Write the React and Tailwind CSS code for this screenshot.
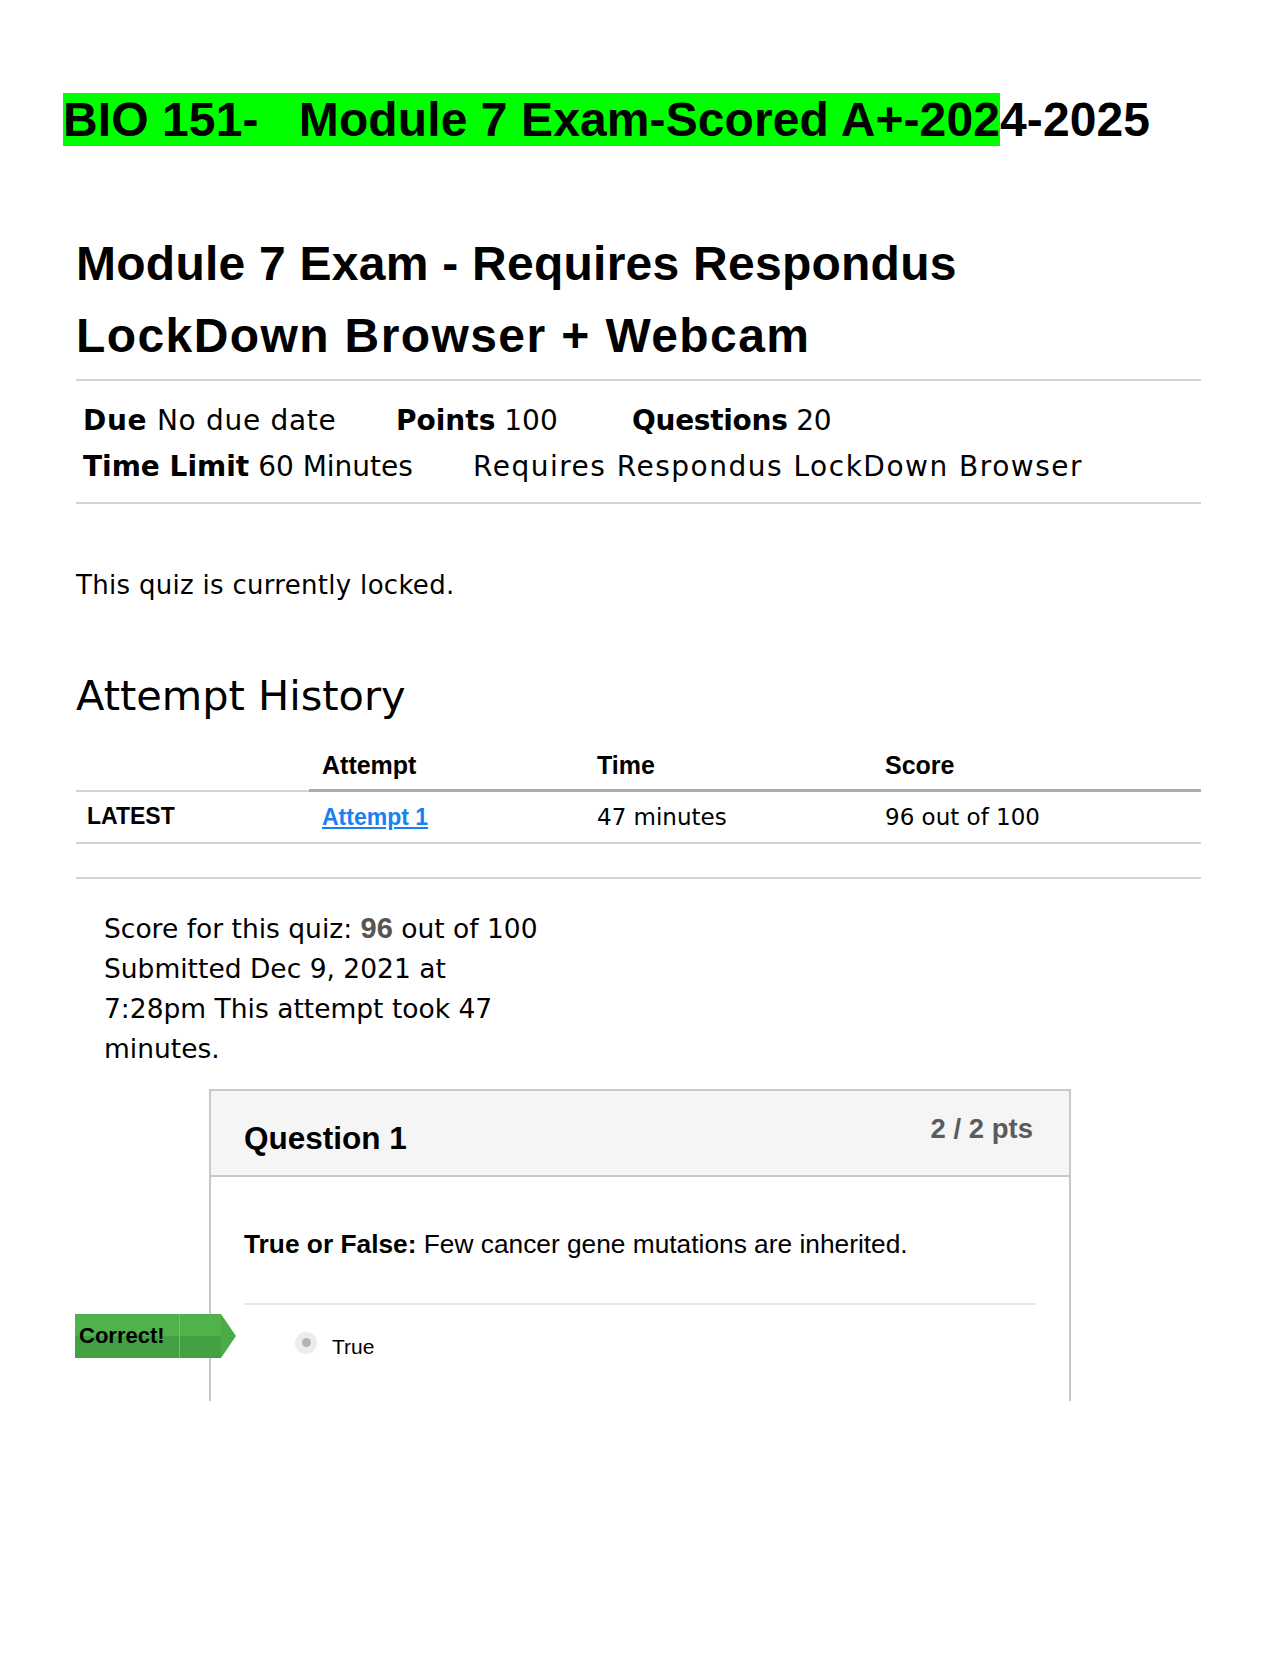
const sans = "font-['Liberation_Sans',Arial,sans-serif]"
const dv = "font-['DejaVu_Sans',Verdana,sans-serif]"

function Meta({ label, value, w }) {
  return (
    <div className={w}>
      <span className="font-bold">{label}</span> {value}
    </div>
  )
}

export default function App() {
  return (
    <div className="w-[1280px] h-[1656px] overflow-hidden bg-white text-black">
      <h1 className={`${sans} pt-[92px] pl-[63px] text-[48px] font-bold leading-[1.149] tracking-[0.1px] whitespace-pre`}>
        <span className="bg-[#00ff00]">BIO 151-   Module 7 Exam-Scored A+-202</span>4-2025
      </h1>

      <div className="ml-[76px] w-[1125px]">
        <h2 className={`${sans} mt-[81px] text-[48px] font-bold leading-[72px]`}>
          <span className="block tracking-[0.25px]">Module 7 Exam - Requires Respondus</span>
          <span className="block tracking-[1.4px]">LockDown Browser + Webcam</span>
        </h2>
        <div className="mt-[7px] h-[2px] bg-[#cfd4d7]" />

        <div className={`${dv} pt-[17px] pb-[12px] pl-[7px] text-[28px] leading-[46px]`}>
          <div className="flex">
            <Meta label="Due" value="No due date" w="w-[313px] tracking-[0.7px]" />
            <Meta label="Points" value="100" w="w-[236px]" />
            <Meta label="Questions" value="20" w="tracking-[-0.3px]" />
          </div>
          <div className="flex">
            <Meta label="Time Limit" value="60 Minutes" w="w-[390px]" />
            <div className="tracking-[1.5px]">Requires Respondus LockDown Browser</div>
          </div>
        </div>
        <div className="h-[2px] bg-[#cfd4d7]" />

        <p className={`${dv} mt-[61px] text-[26px] leading-[40px] tracking-[0.3px]`}>This quiz is currently locked.</p>

        <h3 className={`${dv} mt-[67px] text-[41.5px] leading-[48px]`}>Attempt History</h3>

        <table className="mt-[29px] w-full border-collapse">
          <thead>
            <tr className={`${sans} text-left text-[25px] font-bold leading-[32px]`}>
              <th className="w-[233px] border-b-2 border-[#cfd4d7] pb-[8px]" />
              <th className="w-[288px] border-b-[3px] border-[#a7afb4] px-[13px] pb-[8px]">Attempt</th>
              <th className="w-[288px] border-b-[3px] border-[#a7afb4] pb-[8px]">Time</th>
              <th className="border-b-[3px] border-[#a7afb4] pb-[8px]">Score</th>
            </tr>
          </thead>
          <tbody>
            <tr className="h-[52px] border-b-2 border-[#cfd4d7] text-[23px]">
              <td className={`${sans} pl-[11px] font-bold`}>LATEST</td>
              <td className={`${sans} px-[13px] font-bold`}>
                <a href="#" className="text-[#1a80f2] underline">Attempt 1</a>
              </td>
              <td className={dv}>47 minutes</td>
              <td className={dv}>96 out of 100</td>
            </tr>
          </tbody>
        </table>

        <div className="mt-[33px] h-[2px] bg-[#cfd4d7]" />

        <p className={`${dv} mt-[30px] ml-[28px] w-[440px] text-[26.5px] leading-[40px]`}>
          Score for this quiz: <span className={`${sans} text-[29px] font-bold leading-none text-[#555555]`}>96</span> out of 100
          Submitted Dec 9, 2021 at 7:28pm This attempt took 47 minutes.
        </p>

        <div className={`${sans} relative mt-[20px] ml-[133px] h-[312px] w-[862px] border-x-2 border-t-2 border-[#c4c9cc]`}>
          <div className="flex h-[86px] items-start justify-between border-b-2 border-[#c4c9cc] bg-[#f5f5f5] pl-[33px] pr-[36px]">
            <div className="mt-[29px] text-[31.5px] font-bold leading-[36px]">Question 1</div>
            <div className="mt-[22px] text-[27.5px] font-bold leading-[32px] text-[#5b5b5b]">2 / 2 pts</div>
          </div>
          <div className="px-[33px]">
            <p className="mt-[51px] text-[26.3px] leading-[32px]">
              <span className="font-bold">True or False:</span> Few cancer gene mutations are inherited.
            </p>
            <div className="mt-[43px] h-[2px] bg-[#e6e6e6]" />
            <div className="mt-[21px] flex items-center pl-[51px]">
              <span className="flex h-[22px] w-[22px] items-center justify-center rounded-full bg-[#ececec]">
                <span className="h-[9px] w-[9px] rounded-full bg-[#b3b3b3]" />
              </span>
              <span className="ml-[15px] mt-[8px] text-[21px] leading-[26px]">True</span>
            </div>
          </div>

          <div className="absolute left-[-136px] top-[223px] flex h-[44px] items-stretch">
            <div className="relative flex w-[146px] items-center bg-[linear-gradient(#4fb24b_0%,#4fb24b_50%,#43a043_50%,#43a043_100%)] pl-[4px] text-[22px] font-bold leading-none">
              Correct!
              <div className="absolute left-[104px] top-0 h-full w-[1px] bg-[#6cc56a]" />
            </div>
            <svg width="16" height="44" viewBox="0 0 16 44" className="block">
              <polygon points="0,0 15,22 0,44" fill="#4aab47" />
            </svg>
          </div>
        </div>
      </div>
    </div>
  )
}
